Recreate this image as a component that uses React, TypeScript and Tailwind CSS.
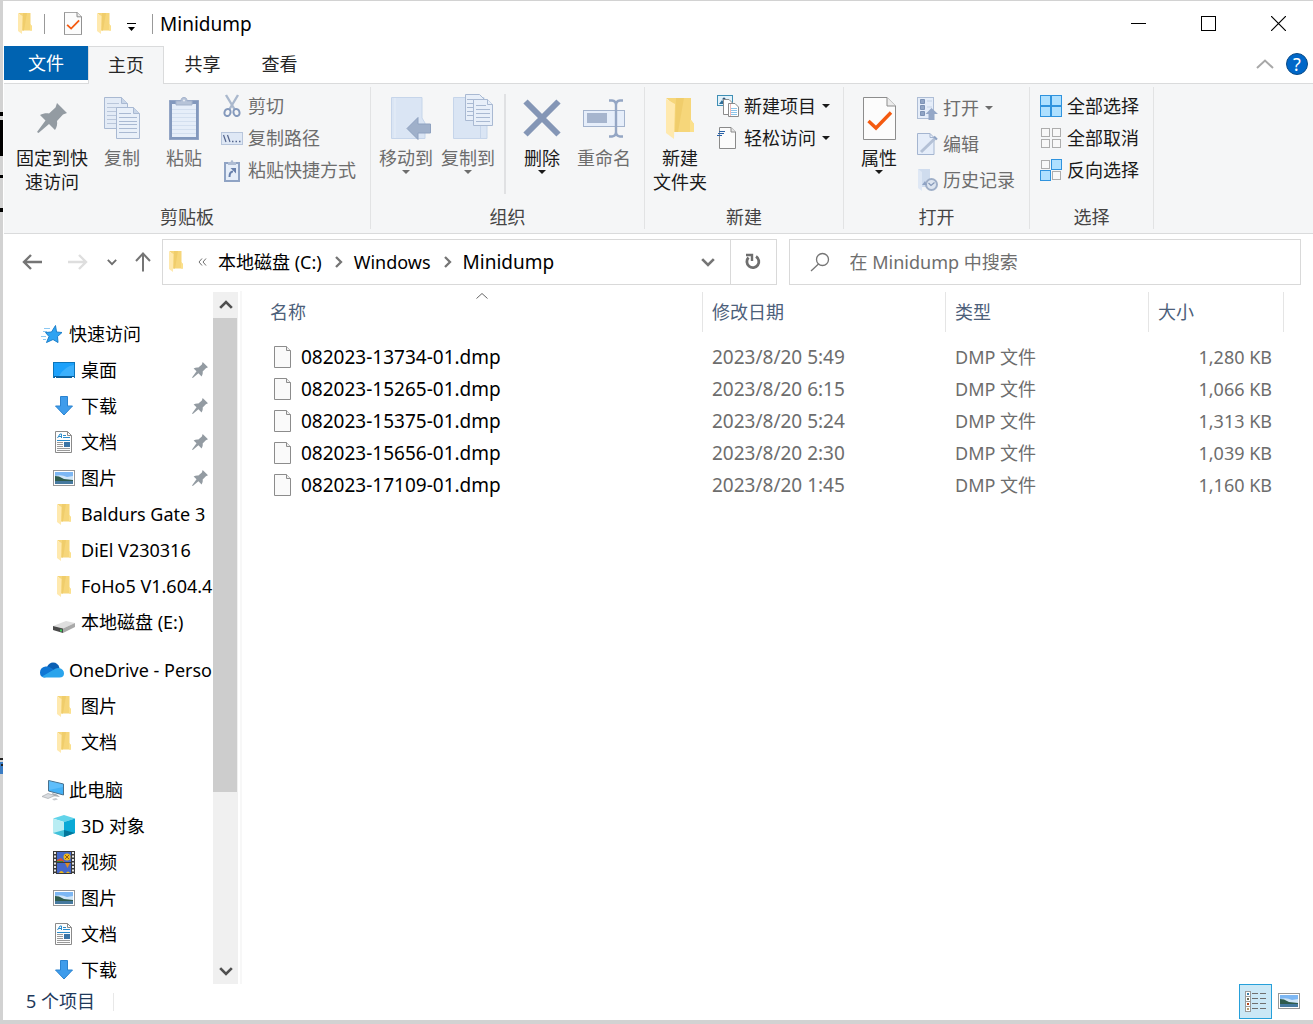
import { useState } from 'react';
import type { ReactNode } from 'react';
import clsx from 'clsx';

const FILES = [
  { name: '082023-13734-01.dmp', date: '2023/8/20 5:49', type: 'DMP 文件', size: '1,280 KB' },
  { name: '082023-15265-01.dmp', date: '2023/8/20 6:15', type: 'DMP 文件', size: '1,066 KB' },
  { name: '082023-15375-01.dmp', date: '2023/8/20 5:24', type: 'DMP 文件', size: '1,313 KB' },
  { name: '082023-15656-01.dmp', date: '2023/8/20 2:30', type: 'DMP 文件', size: '1,039 KB' },
  { name: '082023-17109-01.dmp', date: '2023/8/20 1:45', type: 'DMP 文件', size: '1,160 KB' },
];

/* ---------- Icons ---------- */

function FolderIcon({ className = 'w-[14px] h-[21px]' }: { className?: string }) {
  return (
    <svg viewBox="0 0 28 41" className={className} preserveAspectRatio="none">
      <path d="M0 0H25V22L28 26V34H7V6Z" fill="#f6d67a" />
      <path d="M25 22L28 26V34H24V22Z" fill="#fbe08c" />
      <path d="M10 0H18L12 34H9Z" fill="#f0cd6b" />
      <path d="M0 1L9 6L8 41L0 35Z" fill="#ffe9ae" />
    </svg>
  );
}

function PinIcon({ className }: { className?: string }) {
  return (
    <svg viewBox="0 0 30 30" className={className}>
      <path
        d="M20 0L30 10L26 11.5L20 18C20.500 21 20 24 18 27L12 21L1.500 30L0 29L8.500 17.500L3 12C6 10.500 9 10 12 10.500L18.500 4.500Z"
        fill="#939ba2"
      />
    </svg>
  );
}

function CopyIcon() {
  return (
    <svg viewBox="0 0 36 42" className="w-[36px] h-[42px]" fill="#e3ebf6" stroke="#a9b9d2">
      <path d="M.5 .5H17.500L23.500 6.500V31.500H.5Z" />
      <path d="M17.500 .5V6.500H23.500" fill="#c9d6e8" />
      <path d="M3 6.500H15M3 10.500H20M3 14.500H20M3 18.500H12M3 22.500H12M3 26.500H12" stroke="#b9c6da" />
      <path d="M12.500 10.500H29.500L35.500 16.500V41.500H12.500Z" fill="#e9f0f9" />
      <path d="M29.500 10.500V16.500H35.500" fill="#c9d6e8" />
      <path d="M15 16.500H27M15 20.500H33M15 24.500H33M15 27.500H33M15 31.500H33M15 35.500H33" />
    </svg>
  );
}

function PasteIcon() {
  return (
    <svg viewBox="0 0 30 43" className="w-[30px] h-[43px]">
      <rect y="3" width="30" height="40" rx="1" fill="#8298bd" />
      <rect x=".5" y="3.500" width="29" height="39" rx="1" fill="none" stroke="#94a6c6" />
      <rect x="3" y="7" width="24" height="33" fill="#e6eef9" />
      <path d="M3 12.500H27M3 16.500H27M3 20.500H27M3 24.500H27M3 28.500H27M3 32.500H27M3 36.500H27" stroke="#d3dfef" />
      <path d="M7 8V4H12C12 1.500 13 .5 15 .5S18 1.500 18 4H23V8Z" fill="#b6c3d8" stroke="#a3b2cb" />
      <circle cx="15" cy="3.500" r="1" fill="#e8edf5" />
    </svg>
  );
}

function CutIcon() {
  return (
    <svg viewBox="0 0 18 24" className="w-[18px] h-[24px]" fill="none">
      <path d="M3 1L12 16M15 1L6 16" stroke="#aab8cd" strokeWidth="2.400" />
      <ellipse cx="4.500" cy="18.500" rx="3" ry="3.600" stroke="#8499bc" strokeWidth="2" transform="rotate(20 4.500 18.500)" />
      <ellipse cx="13.500" cy="18.500" rx="3" ry="3.600" stroke="#8499bc" strokeWidth="2" transform="rotate(-20 13.500 18.500)" />
    </svg>
  );
}

function PathIcon() {
  return (
    <svg viewBox="0 0 22 13" className="w-[22px] h-[13px]">
      <rect x=".5" y=".5" width="21" height="12" fill="#dfe8f5" stroke="#b7c5db" />
      <path d="M2.500 3L5 10M6.500 3L9 10" stroke="#55658c" strokeWidth="1.200" />
      <path d="M11 9.500H12.500M14.500 9.500H16M18 9.500H19.500" stroke="#55658c" strokeWidth="1.500" />
    </svg>
  );
}

function ShortcutIcon() {
  return (
    <svg viewBox="0 0 16 23" className="w-[16px] h-[23px]">
      <rect x="1" y="4" width="14" height="18" fill="#e6eef9" stroke="#8fa3c4" strokeWidth="2" />
      <path d="M4 6V3H6.500Q8 -1 9.500 3H12V6Z" fill="#aebcd3" />
      <path d="M5.500 18C5.500 14 7 12.500 9 12.500" stroke="#6880ac" strokeWidth="2" fill="none" />
      <path d="M6.500 9H12V14.500Z" fill="#6880ac" />
    </svg>
  );
}

function MoveToIcon() {
  return (
    <svg viewBox="-10 0 50 45" className="w-[50px] h-[45px]">
      <path d="M.5 1.500H31V22L34 27V42.500H.5Z" fill="#dae5f4" stroke="#c6d5ea" />
      <path d="M4 2V42" stroke="#e6eef8" />
      <path d="M16 32.500L27 21.500V28H39.500V37H27V43.500Z" fill="#9fb0ca" stroke="#8fa2c0" />
    </svg>
  );
}

function CopyToIcon() {
  return (
    <svg viewBox="-10 0 50 49" className="w-[50px] h-[49px]" fill="#e8eff9" stroke="#a9b9d2">
      <path d="M.5 3.500H31V22L34 27V44.500H.5Z" fill="#dae5f4" stroke="#c6d5ea" />
      <path d="M27.500 30V44" stroke="#c6d5ea" />
      <path d="M12.500 .5H26.500L31.500 5.500V26.500H12.500Z" />
      <path d="M14 5.500H24M14 9.500H20M14 13.500H20M14 17.500H20M14 21.500H20" />
      <path d="M20.500 5.500H34.500L39.500 10.500V31.500H20.500Z" />
      <path d="M34.500 5.500V10.500H39.500" />
      <path d="M23 11.500H33M23 15.500H37M23 19.500H37M23 23.500H37M23 27.500H37" />
    </svg>
  );
}

function DeleteIcon() {
  return (
    <svg viewBox="0 0 38 38" className="w-[38px] h-[38px]">
      <path d="M2.500 2.500L35.500 35.500M35.500 2.500L2.500 35.500" stroke="#8496b6" strokeWidth="6" />
    </svg>
  );
}

function RenameIcon() {
  return (
    <svg viewBox="0 0 43 39" className="w-[43px] h-[39px]" fill="none">
      <rect x=".5" y="11.500" width="41" height="16" fill="#e6eefa" stroke="#a3b3cd" />
      <rect x="4" y="14" width="20" height="10" fill="#a6b5ce" />
      <path d="M26 1.500H29Q33 2 33 6V33Q33 37 29 37.500H26M40 1.500H37Q33 2 33 6M33 33Q33 37 37 37.500H40" stroke="#94a6c4" strokeWidth="2.400" />
    </svg>
  );
}

function NewItemIcon() {
  return (
    <svg viewBox="0 0 22 22" className="w-[22px] h-[22px]">
      <rect x=".5" y=".5" width="15" height="10" fill="#e3f2fa" stroke="#3f8fb5" />
      <path d="M2 9L5 5L8 9Z" fill="#2f6f9a" />
      <circle cx="7" cy="4" r="1.500" fill="#33577a" />
      <path d="M6.500 4.500H12L15.500 8V19.500H6.500Z" fill="#fff" stroke="#8c8c8c" />
      <path d="M11.500 8.500H18L21.500 12V21.500H11.500Z" fill="#fff" stroke="#8c8c8c" />
      <path d="M14 13.500H20M14 15.500H20M14 17.500H20M14 19.500H20" stroke="#8cc4ea" />
      <path d="M13.500 9V21" stroke="#e89a9a" strokeWidth=".7" />
    </svg>
  );
}

function EasyAccessIcon() {
  return (
    <svg viewBox="0 0 22 22" className="w-[22px] h-[22px]">
      <path d="M2.500 .5H14L18.500 5V21.500H2.500Z" fill="#fbfbfb" stroke="#8a8a8a" />
      <path d="M14 .5V5H18.500" fill="#e5e5e5" stroke="#8a8a8a" />
      <path d="M2 4.500H8M1 6.500H7M0 8.500H5" stroke="#2a62a8" strokeWidth="1.200" />
    </svg>
  );
}

function PropertiesIcon({ className = 'w-[33px] h-[43px]' }: { className?: string }) {
  return (
    <svg viewBox="0 0 33 43" className={className}>
      <path d="M.5 .5H24L32.500 9V42.500H.5Z" fill="#fcfcfc" stroke="#8d8d8d" vectorEffect="non-scaling-stroke" />
      <path d="M24 .5V9H32.500" fill="#ececec" stroke="#8d8d8d" vectorEffect="non-scaling-stroke" />
      <path d="M5.500 24L13 31L28 15.500" fill="none" stroke="#f45a10" strokeWidth="3.400" />
    </svg>
  );
}

function OpenIcon() {
  return (
    <svg viewBox="0 0 21 23" className="w-[21px] h-[23px]">
      <rect x=".5" y=".5" width="16" height="21" fill="#e5edf9" stroke="#aebdd5" />
      <path d="M3.500 2.500H7.500V6.500H3.500ZM3.500 8.500H7.500V12.500H3.500ZM3.500 14.500H7.500V18.500H3.500Z" fill="#90a4c4" stroke="#7d92b5" />
      <path d="M10 4H15M10 10H15" stroke="#c5d2e5" />
      <path d="M14.500 11L21 17H17.500V23H11.500V17H8.500Z" fill="#94a7c7" />
    </svg>
  );
}

function EditIcon() {
  return (
    <svg viewBox="0 0 21 22" className="w-[21px] h-[22px]">
      <path d="M.5 .5H13L17 4.500V21.500H.5Z" fill="#e5edf9" stroke="#a4b5d0" />
      <path d="M13 .5V4.500H17" fill="none" stroke="#a4b5d0" />
      <path d="M4 19L18.500 5" stroke="#b4c1d6" strokeWidth="3" />
      <path d="M17 3.500L20 6.500" stroke="#8fa3c4" strokeWidth="2" />
    </svg>
  );
}

function HistoryIcon() {
  return (
    <svg viewBox="0 0 21 22" className="w-[21px] h-[22px]">
      <path d="M1 0H13V18H4Z" fill="#cfdcee" />
      <path d="M1 0L5 3V22L1 19Z" fill="#dfe8f5" />
      <circle cx="14.500" cy="15.500" r="5.500" fill="#dde5f0" stroke="#9fafc8" strokeWidth="2" />
      <path d="M11.500 14L14 16.500L17.500 13.500" stroke="#8598b8" fill="none" strokeWidth="1.200" />
      <path d="M5 16L8 12L10 16Z" fill="#8fa3c4" />
    </svg>
  );
}

// Four tiles; `on` lists the highlighted ones.
function TilesIcon({ on }: { on: number[] }) {
  const spots = [[0, 0], [11, 0], [0, 11], [11, 11]];
  return (
    <svg viewBox="0 0 22 22" className="w-[22px] h-[22px]">
      {spots.map(([x, y], i) =>
        on.includes(i) ? (
          <rect key={i} x={x + 0.5} y={y + 0.5} width="10" height="10" fill="#aee0ff" stroke="#2f93de" />
        ) : (
          <rect key={i} x={x + 1.5} y={y + 1.5} width="8" height="8" fill="#f8f8f8" stroke="#adadad" />
        ),
      )}
    </svg>
  );
}

function StarIcon() {
  return (
    <svg viewBox="1 0 22 20" className="w-[22px] h-[20px]">
      <path d="M4 4.500H10M3 7.500H7M1 12.500H6M3 15.500H6" stroke="#8cc8f2" />
      <path d="M15.500 1.500L16.500 8L22 8.500L17.500 12.500L18 18.500L13 15.500L6.500 18.500L9 12.500L5.500 8.500L11.500 8Z" fill="#2ea3f2" stroke="#1b7fcb" />
    </svg>
  );
}

function DesktopIcon() {
  return (
    <svg viewBox="0 0 22 17" className="w-[22px] h-[17px]">
      <rect x=".5" y=".5" width="21" height="15" fill="#1ca1fb" stroke="#0b75bb" />
      <path d="M6 14Q12 4 21 3V15H6Z" fill="#4ab6fc" opacity=".7" />
      <path d="M1 15H21" stroke="#0b5f9c" strokeWidth="2" />
      <path d="M2 15.500H3M19 15.500H21" stroke="#fff" />
    </svg>
  );
}

function DownloadIcon() {
  return (
    <svg viewBox="0 0 18 20" className="w-[18px] h-[20px]">
      <path d="M5.500 .5H12.500V10H17.500L9 19L.5 10H5.500Z" fill="#3f9ceb" stroke="#2b83d0" />
    </svg>
  );
}

function DocumentIcon() {
  return (
    <svg viewBox="0 0 18 22" className="w-[18px] h-[22px]">
      <path d="M.5 .5H12.500L16.500 4.500V21.500H.5Z" fill="#fdfdfd" stroke="#8a8a8a" />
      <path d="M12.500 .5V4.500H16.500" fill="none" stroke="#8a8a8a" />
      <path d="M2.500 7L5 3H6.500V7M4 5.500H6.500M8 4.500H11M8 6.500H15M2 9.500H15" stroke="#2a8ccc" fill="none" />
      <path d="M2 11.500H8M2 13.500H8M2 15.500H8M2 17.500H15M2 19.500H15" stroke="#9a9a9a" />
      <rect x="9" y="11" width="6" height="5" fill="#3b74a5" />
    </svg>
  );
}

function PictureIcon() {
  return (
    <svg viewBox="0 0 22 16" className="w-[22px] h-[16px]">
      <rect x=".5" y=".5" width="21" height="15" fill="#fff" stroke="#979797" />
      <rect x="2" y="2" width="18" height="12" fill="#7db7f3" />
      <path d="M2 6Q8 4 14 7L20 6V11H2Z" fill="#cfe5f7" />
      <path d="M2 6L6 6.500L11 9L20 10V11H2Z" fill="#2f5b4c" />
      <rect x="2" y="11" width="18" height="3" fill="#45799f" />
    </svg>
  );
}

function DriveIcon() {
  return (
    <svg viewBox="0 -9 22 21" className="w-[22px] h-[21px]">
      <path d="M0 5L13 0L22 2L10 7.500Z" fill="#dedede" />
      <path d="M0 5L10 7.500V12L0 9Z" fill="#4a4a4a" />
      <path d="M10 7.500L22 2V6L10 12Z" fill="#a9a9a9" />
      <rect x="7" y="8.500" width="2" height="2" fill="#3fd05a" />
    </svg>
  );
}

function OneDriveIcon() {
  return (
    <svg viewBox="0 0 24 16" className="w-[24px] h-[16px]">
      <path d="M7 5Q9 .5 13 .5Q18 .5 19.500 6L12 10Z" fill="#0a5fb4" />
      <path d="M5.500 4.500Q9 4 12 6.500L15 9L5 15.500Q0 15.500 0 10.500Q0 5.500 5.500 4.500Z" fill="#0f76d4" />
      <path d="M14 7.500Q16 5.500 19 6Q24 7 24 11.500Q24 15.500 19.500 15.500H5Q3 15.500 2 14.500Z" fill="#2aa4ec" />
    </svg>
  );
}

function ComputerIcon() {
  return (
    <svg viewBox="0 0 24 22" className="w-[24px] h-[22px]">
      <path d="M8.500 1.500L23.500 5V16L8.500 12Z" fill="#44b1f6" stroke="#49708c" />
      <path d="M9 2L23 5.500V8L9 11Z" fill="#7accff" opacity=".5" />
      <path d="M12 14L17 15.500L20 18L13 17Z" fill="#a8adb2" />
      <path d="M2 17.500L8 14.500L15 16.500L8 19.500Z" fill="#d9dce0" stroke="#a5a9ae" strokeWidth=".7" />
      <path d="M12 20L16 19L18 20.500L14 21.500Z" fill="#c6c9cd" />
    </svg>
  );
}

function CubeIcon() {
  return (
    <svg viewBox="0 0 22 22" className="w-[22px] h-[22px]">
      <path d="M0 3.500L11 0L22 3.500L11 7Z" fill="#62d4ea" />
      <path d="M0 3.500L11 7V22L0 18Z" fill="#b9edf3" />
      <path d="M11 7L22 3.500V18L11 22Z" fill="#0aa9d6" />
      <path d="M11 15L22 18L11 22Z" fill="#02769a" />
      <path d="M0 18L11 15V22Z" fill="#41c1da" />
    </svg>
  );
}

function VideoIcon() {
  return (
    <svg viewBox="0 0 22 23" className="w-[22px] h-[23px]">
      <rect width="22" height="23" fill="#3a3a3a" />
      <rect x="4" y="1" width="14" height="10" fill="#4568c9" />
      <rect x="4" y="12" width="14" height="10" fill="#4568c9" />
      <path d="M2 1V23M20 1V23" stroke="#e6e6e6" strokeWidth="2" strokeDasharray="2 1.500" />
      <ellipse cx="14" cy="6" rx="3.500" ry="3.500" fill="#efb91c" />
      <path d="M4 9L8 7L11 10V11H4Z" fill="#d8502a" />
      <path d="M4 10H10V11H4Z" fill="#3d8a3a" />
      <path d="M12 12H17L14.500 17Z" fill="#e08a1e" />
      <path d="M6 22Q8 18 11 22ZM13 22Q15 19 17 22Z" fill="#efb91c" />
      <path d="M12 4L16 8M16 4L12 8" stroke="#7a3c10" strokeWidth=".8" />
    </svg>
  );
}

function FileIcon() {
  return (
    <svg viewBox="0 0 18 22" className="w-[18px] h-[22px]">
      <path d="M1.500 .5H13.500L17.500 4.500V21.500H1.500Z" fill="#fafafa" stroke="#8c8c8c" />
      <path d="M13.500 .5V4.500H17.500" fill="#eee" stroke="#8c8c8c" />
    </svg>
  );
}

function DetailsIcon() {
  return (
    <svg viewBox="0 0 21 21" className="w-[21px] h-[21px]">
      {['#3a7fa8', '#6b6b52', '#b4431a', '#b39b6c'].map((fill, i) => (
        <g key={fill}>
          <rect x=".5" y={i * 5 + 0.5} width="5" height="5" fill="#fff" stroke="#9a9a9a" />
          <rect x="2" y={i * 5 + 2} width="2" height="2" fill={fill} />
          <path d={`M7 ${i * 5 + 2.5}h6M15 ${i * 5 + 2.5}h6`} stroke="#6f6f6f" />
        </g>
      ))}
    </svg>
  );
}

function DropArrow() {
  return (
    <svg viewBox="0 0 8 4" className="w-[8px] h-[4px] shrink-0">
      <path d="M0 0H8L4 4Z" fill="currentColor" />
    </svg>
  );
}

function Chevron({ dir, className }: { dir: 'up' | 'down' | 'right'; className?: string }) {
  const paths = { up: 'M1 8.500L6 3.500L11 8.500', down: 'M1 3.500L6 8.500L11 3.500', right: 'M4 1L9 6L4 11' };
  return (
    <svg viewBox="0 0 12 12" className={clsx('shrink-0', className)} fill="none">
      <path d={paths[dir]} stroke="currentColor" strokeWidth="2.300" />
    </svg>
  );
}

/* ---------- Ribbon ---------- */

function Group({ label, className = 'pl-1 pr-[9px]', children }: { label: string; className?: string; children: ReactNode }) {
  return (
    <section className="flex flex-col border-r border-[#e2e3e4] mt-[3px] mb-1">
      <div className={clsx('flex items-start h-[119px]', className)}>{children}</div>
      <h2 className="text-center leading-6 text-[#444]">{label}</h2>
    </section>
  );
}

type ButtonProps = { icon: ReactNode; label: string; dim?: boolean; menu?: boolean };

function BigButton({ icon, label, dim, menu, className = 'w-[62px]' }: ButtonProps & { className?: string }) {
  return (
    <button className={clsx('flex flex-col items-center shrink-0 pt-[3px] leading-6 whitespace-pre', className, dim ? 'text-[#6d6d6d]' : 'text-[#1a1a1a]')}>
      <span className="h-14 flex items-center justify-center">{icon}</span>
      {label}
      {menu && <DropArrow />}
    </button>
  );
}

function SmallButton({ icon, label, dim, menu, tall }: ButtonProps & { tall?: boolean }) {
  return (
    <button className={clsx('flex items-center gap-1 px-[5px] whitespace-nowrap', tall ? 'h-9' : 'h-8', dim ? 'text-[#6d6d6d]' : 'text-[#1a1a1a]')}>
      <span className="w-6 flex justify-center">{icon}</span>
      {label}
      {menu && <span className="pl-[2px]"><DropArrow /></span>}
    </button>
  );
}

function Ribbon() {
  return (
    <div className="flex h-[150px] shrink-0 bg-[#f5f6f7] border-b border-[#dadbdc]">
      <Group label="剪贴板" className="pl-[9px] pr-[9px]">
        <BigButton className="w-[78px]" label={'固定到快\n速访问'} icon={<PinIcon className="w-[30px] h-[30px]" />} />
        <BigButton dim label="复制" icon={<CopyIcon />} />
        <BigButton dim label="粘贴" icon={<PasteIcon />} />
        <div className="flex flex-col items-start pt-[3px]">
          <SmallButton dim label="剪切" icon={<CutIcon />} />
          <SmallButton dim label="复制路径" icon={<PathIcon />} />
          <SmallButton dim label="粘贴快捷方式" icon={<ShortcutIcon />} />
        </div>
      </Group>
      <Group label="组织">
        <BigButton dim menu label="移动到" icon={<MoveToIcon />} />
        <BigButton dim menu label="复制到" icon={<CopyToIcon />} />
        <div className="w-[2px] h-[100px] mt-[7px] mx-[5px] bg-[#e0e1e3]" />
        <BigButton menu label="删除" icon={<DeleteIcon />} />
        <BigButton dim label="重命名" icon={<RenameIcon />} />
      </Group>
      <Group label="新建" className="pl-1 pr-[8px]">
        <BigButton label={'新建\n文件夹'} icon={<FolderIcon className="w-[28px] h-[41px]" />} />
        <div className="flex flex-col items-start pt-[3px]">
          <SmallButton menu label="新建项目" icon={<NewItemIcon />} />
          <SmallButton menu label="轻松访问" icon={<EasyAccessIcon />} />
        </div>
      </Group>
      <Group label="打开">
        <BigButton menu label="属性" icon={<PropertiesIcon />} />
        <div className="flex flex-col items-start pt-[3px]">
          <SmallButton dim tall menu label="打开" icon={<OpenIcon />} />
          <SmallButton dim tall label="编辑" icon={<EditIcon />} />
          <SmallButton dim tall label="历史记录" icon={<HistoryIcon />} />
        </div>
      </Group>
      <Group label="选择">
        <div className="flex flex-col items-start pt-[3px]">
          <SmallButton label="全部选择" icon={<TilesIcon on={[0, 1, 2, 3]} />} />
          <SmallButton label="全部取消" icon={<TilesIcon on={[]} />} />
          <SmallButton label="反向选择" icon={<TilesIcon on={[1, 2]} />} />
        </div>
      </Group>
    </div>
  );
}

/* ---------- Sidebar ---------- */

type NavItem = { label: string; icon: ReactNode; pinned?: boolean };

const NAV: { root: NavItem; items: NavItem[] }[] = [
  {
    root: { label: '快速访问', icon: <StarIcon /> },
    items: [
      { label: '桌面', icon: <DesktopIcon />, pinned: true },
      { label: '下载', icon: <DownloadIcon />, pinned: true },
      { label: '文档', icon: <DocumentIcon />, pinned: true },
      { label: '图片', icon: <PictureIcon />, pinned: true },
      { label: 'Baldurs Gate 3', icon: <FolderIcon /> },
      { label: 'DiEl V230316', icon: <FolderIcon /> },
      { label: 'FoHo5 V1.604.4', icon: <FolderIcon /> },
      { label: '本地磁盘 (E:)', icon: <DriveIcon /> },
    ],
  },
  {
    root: { label: 'OneDrive - Personal', icon: <OneDriveIcon /> },
    items: [
      { label: '图片', icon: <FolderIcon /> },
      { label: '文档', icon: <FolderIcon /> },
    ],
  },
  {
    root: { label: '此电脑', icon: <ComputerIcon /> },
    items: [
      { label: '3D 对象', icon: <CubeIcon /> },
      { label: '视频', icon: <VideoIcon /> },
      { label: '图片', icon: <PictureIcon /> },
      { label: '文档', icon: <DocumentIcon /> },
      { label: '下载', icon: <DownloadIcon /> },
    ],
  },
];

function NavRow({ item, root }: { item: NavItem; root?: boolean }) {
  return (
    <li>
      <a href="#" className={clsx('flex items-center h-9 gap-[5px] pr-[5px] whitespace-nowrap overflow-hidden', root ? 'pl-9' : 'pl-12')}>
        <span className="w-6 flex justify-center shrink-0">{item.icon}</span>
        {item.label}
        {item.pinned && <PinIcon className="w-4 h-4 ml-auto shrink-0" />}
      </a>
    </li>
  );
}

function Sidebar() {
  return (
    <nav className="w-[209px] shrink-0 pt-[25px] overflow-hidden">
      {NAV.map((section) => (
        <ul key={section.root.label} className="mb-3">
          <NavRow root item={section.root} />
          {section.items.map((item) => (
            <NavRow key={item.label} item={item} />
          ))}
        </ul>
      ))}
    </nav>
  );
}

function ScrollBar() {
  return (
    <div className="flex flex-col w-[25px] shrink-0 mt-px bg-[#f0f0f0] text-[#505050]">
      <button aria-label="向上" className="h-[26px] flex items-center justify-center"><Chevron dir="up" className="w-[14px] h-[14px]" /></button>
      <div className="flex-1 min-h-0">
        <div className="w-6 h-[74%] bg-[#cdcdcd]" />
      </div>
      <button aria-label="向下" className="h-[26px] flex items-center justify-center"><Chevron dir="down" className="w-[14px] h-[14px]" /></button>
    </div>
  );
}

/* ---------- File list ---------- */

function HeadCell({ label, sorted, className }: { label: string; sorted?: boolean; className?: string }) {
  return (
    <th className={clsx('p-0 h-[50px] align-top text-left font-normal', className)}>
      <div className="relative h-10 mt-px pl-[9px] leading-10 border-r border-[#e5e5e5] text-[#4c607a]">
        {label}
        {sorted && (
          <svg viewBox="0 0 12 6" className="absolute top-[1px] left-1/2 -ml-[6px] w-[12px] h-[6px]" fill="none">
            <path d="M.5 5.500L6 .5L11.500 5.500" stroke="#666" />
          </svg>
        )}
      </div>
    </th>
  );
}

function FileTable() {
  return (
    <main className="flex-1 min-w-0 ml-[2px] pl-[19px] pr-[29px] border-l-2 border-[#f7f7f7]">
      <table className="w-full table-fixed">
        <thead>
          <tr>
            <HeadCell label="名称" sorted />
            <HeadCell label="修改日期" className="w-[243px]" />
            <HeadCell label="类型" className="w-[203px]" />
            <HeadCell label="大小" className="w-[135px]" />
          </tr>
        </thead>
        <tbody className="text-[#6d6d6d]">
          {FILES.map((file) => (
            <tr key={file.name} className="h-8">
              <td className="p-0 pl-[12px] text-black text-[19px]">
                <span className="flex items-center gap-[10px]">
                  <FileIcon />
                  {file.name}
                </span>
              </td>
              <td className="p-0 pl-[9px] text-[19px]">{file.date}</td>
              <td className="p-0 pl-[9px]">{file.type}</td>
              <td className="p-0 pr-[12px] text-right">{file.size}</td>
            </tr>
          ))}
        </tbody>
      </table>
    </main>
  );
}

/* ---------- Window ---------- */

function TitleBar() {
  return (
    <header className="flex items-center h-[45px] shrink-0">
      <div className="flex items-center flex-1 pl-[14px]">
        <FolderIcon />
        <div className="w-px h-5 ml-3 bg-[#999]" />
        <button aria-label="属性" className="ml-[19px]"><PropertiesIcon className="w-[18px] h-[23px]" /></button>
        <button aria-label="新建文件夹" className="ml-[15px]"><FolderIcon /></button>
        <button aria-label="自定义快速访问工具栏" className="ml-4 mt-2">
          <svg viewBox="0 0 9 9" className="w-[9px] h-[9px]">
            <path d="M0 .5H9" stroke="#000" />
            <path d="M1 4H8L4.500 8Z" />
          </svg>
        </button>
        <div className="w-px h-5 ml-4 bg-[#999]" />
        <h1 className="ml-[7px] text-[19px] leading-6">Minidump</h1>
      </div>
      <button aria-label="最小化" className="w-[70px] h-full flex items-center justify-center">
        <svg viewBox="0 0 15 15" className="w-[15px] h-[15px]"><path d="M0 7.500H15" stroke="#000" /></svg>
      </button>
      <button aria-label="最大化" className="w-[70px] h-full flex items-center justify-center">
        <svg viewBox="0 0 15 15" className="w-[15px] h-[15px]"><rect x=".5" y=".5" width="14" height="14" fill="none" stroke="#000" /></svg>
      </button>
      <button aria-label="关闭" className="w-[70px] h-full flex items-center justify-center">
        <svg viewBox="0 0 15 15" className="w-[15px] h-[15px]"><path d="M0 0L15 15M15 0L0 15" stroke="#000" strokeWidth="1.200" /></svg>
      </button>
    </header>
  );
}

function Tabs() {
  return (
    <div className="flex h-[38px] shrink-0 border-b border-[#dadbdc] text-[#262626]">
      <button className="w-[84px] h-[34px] bg-[#0063b1] text-white">文件</button>
      <button className="w-[76px] h-[38px] pb-[2px] bg-[#f5f6f7] border border-b-0 border-[#dadbdc]">主页</button>
      <button className="w-[77px] pb-[2px]">共享</button>
      <button className="w-[77px] pb-[2px]">查看</button>
      <div className="flex items-center ml-auto pr-[5px] pb-[2px] gap-3">
        <button aria-label="最小化功能区">
          <svg viewBox="0 0 18 10" className="w-[18px] h-[10px]" fill="none"><path d="M1 9L9 1.500L17 9" stroke="#a8a8a8" strokeWidth="2" /></svg>
        </button>
        <button aria-label="帮助" className="w-[22px] h-[22px] rounded-full border border-[#0a4a86] bg-[#0067c8] text-white leading-5">?</button>
      </div>
    </div>
  );
}

function AddressRow() {
  const [query, setQuery] = useState('');
  return (
    <div className="flex items-center h-[55px] mb-[2px] shrink-0 pr-3 text-[#6e6e6e]">
      <div className="flex items-center w-[158px] shrink-0 pl-[18px]">
        <button aria-label="返回">
          <svg viewBox="0 0 20 16" className="w-[20px] h-[16px]" fill="none"><path d="M20 8H2M9 1L2 8L9 15" stroke="#757575" strokeWidth="2.400" /></svg>
        </button>
        <button aria-label="前进" className="ml-[26px]">
          <svg viewBox="0 0 20 16" className="w-[20px] h-[16px]" fill="none"><path d="M0 8H18M11 1L18 8L11 15" stroke="#dedede" strokeWidth="2.400" /></svg>
        </button>
        <button aria-label="最近浏览的位置" className="ml-[19px]"><Chevron dir="down" className="w-[10px] h-[10px]" /></button>
        <button aria-label="上移" className="ml-[18px]">
          <svg viewBox="0 0 16 20" className="w-[16px] h-[20px]" fill="none"><path d="M8 19.500V2M1 9L8 1.500L15 9" stroke="#757575" strokeWidth="2" /></svg>
        </button>
      </div>
      <div className="flex flex-[6] min-w-0 h-[46px] border border-[#d9d9d9] text-black">
        <div className="flex items-center flex-1 min-w-0 pl-[6px] whitespace-nowrap">
          <FolderIcon />
          <svg viewBox="0 0 9 8" className="w-[9px] h-[8px] ml-[15px]" fill="none"><path d="M4 .5L1 4L4 7.500M8 .5L5 4L8 7.500" stroke="#6e6e6e" /></svg>
          <a href="#" className="ml-[11px]">本地磁盘 (C:)</a>
          <Chevron dir="right" className="w-3 h-3 mx-[10px] text-[#757575]" />
          <a href="#">Windows</a>
          <Chevron dir="right" className="w-3 h-3 mx-[10px] text-[#757575]" />
          <a href="#" className="text-[19px]">Minidump</a>
          <button aria-label="以前的位置" className="ml-auto mr-[15px] text-[#757575]"><Chevron dir="down" className="w-[14px] h-[14px]" /></button>
        </div>
        <button aria-label="刷新" className="w-[46px] flex items-center justify-center border-l border-[#d9d9d9]">
          <svg viewBox="0 0 16 18" className="w-[16px] h-[18px]" fill="none">
            <path d="M11 3.500A6 6 0 1 1 3.500 4.500" stroke="#6e6e6e" strokeWidth="2.800" />
            <path d="M1 2H7V8" stroke="#6e6e6e" strokeWidth="2.400" />
          </svg>
        </button>
      </div>
      <label className="flex items-center flex-[5] min-w-0 h-[46px] ml-3 border border-[#d9d9d9]">
        <svg viewBox="0 0 20 20" className="w-[20px] h-[20px] ml-5 shrink-0" fill="none">
          <circle cx="12.500" cy="7.500" r="6" stroke="#757575" strokeWidth="1.300" />
          <path d="M8.500 12L1 19" stroke="#757575" strokeWidth="1.300" />
        </svg>
        <input
          type="text"
          aria-label="搜索"
          value={query}
          onChange={(e) => setQuery(e.target.value)}
          placeholder="在 Minidump 中搜索"
          className="flex-1 min-w-0 ml-5 outline-none placeholder:text-[#6e6e6e]"
        />
      </label>
    </div>
  );
}

function StatusBar() {
  return (
    <footer className="flex h-9 shrink-0 pl-[22px] pr-[13px] text-[#1e395b]">
      <span className="leading-[34px]">5 个项目</span>
      <div className="w-px h-[18px] mt-[9px] ml-[18px] bg-[#e8e8e8]" />
      <button aria-label="详细信息" className="w-[33px] h-[35px] ml-auto flex items-center justify-center bg-[#cbe8f6] border border-[#26a0da]">
        <DetailsIcon />
      </button>
      <button aria-label="大缩略图" className="ml-[6px] pb-[2px]"><PictureIcon /></button>
    </footer>
  );
}

export default function App() {
  return (
    <div
      lang="zh-CN"
      className="relative flex flex-col h-screen pt-px pl-[3px] pb-1 bg-[#d2d2d2] text-lg leading-6 text-black font-['Noto_Sans','Noto_Sans_CJK_SC',sans-serif]"
    >
      {/* slivers of the page behind the window */}
      <svg viewBox="0 0 3 100" className="absolute left-0 top-[112px] w-[3px] h-[100px]">
        <path d="M0 0H3V4H0ZM0 8H3V44H0ZM0 63H3V66H0ZM0 96H3V100H0Z" />
      </svg>
      <svg viewBox="0 0 3 16" className="absolute left-0 top-[758px] w-[3px] h-[16px]">
        <path d="M0 4H3V16H0Z" fill="#3b7dc4" />
        <path d="M0 0H3V2H0ZM1 6H3V8H1Z" fill="#222" />
      </svg>
      <div className="flex flex-col flex-1 min-h-0 pl-px bg-white">
        <TitleBar />
        <Tabs />
        <Ribbon />
        <AddressRow />
        <div className="flex flex-1 min-h-0">
          <Sidebar />
          <ScrollBar />
          <FileTable />
        </div>
        <StatusBar />
      </div>
    </div>
  );
}
